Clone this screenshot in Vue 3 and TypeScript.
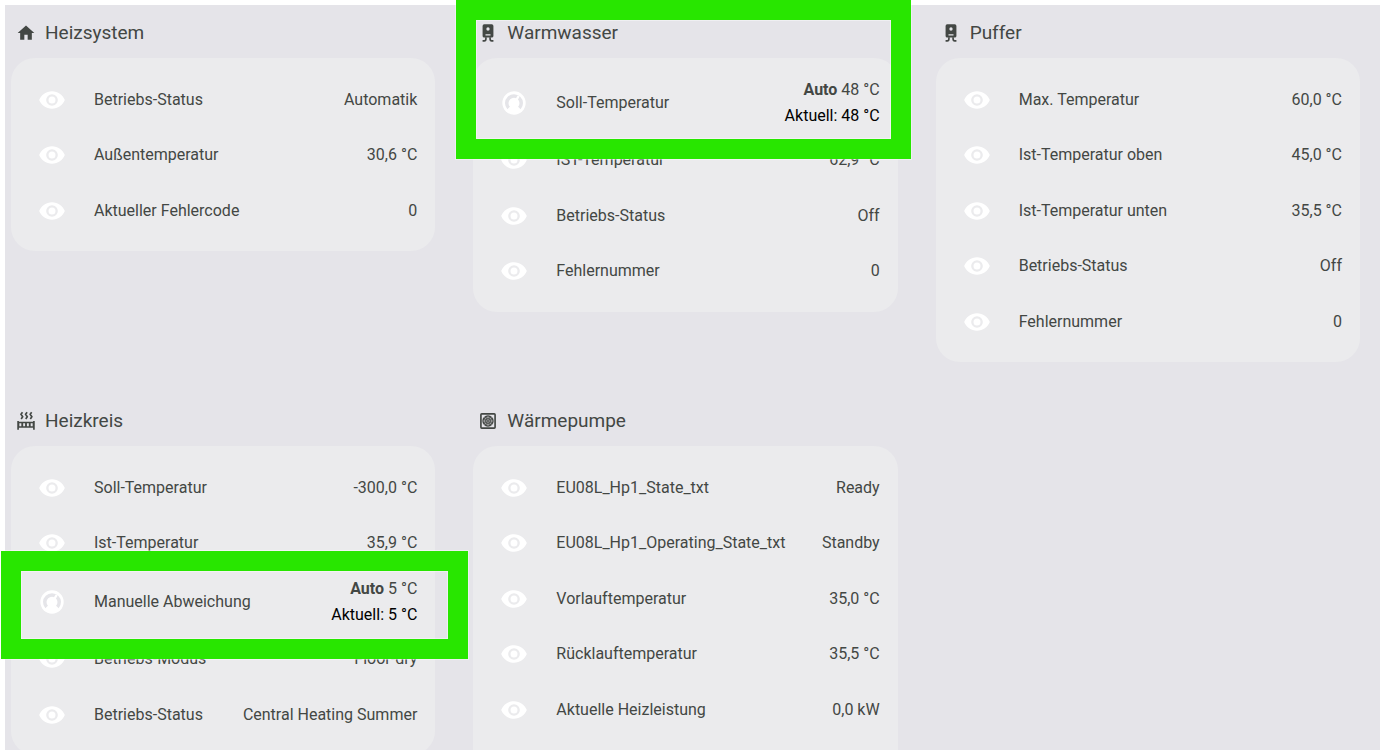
<script setup lang="ts">
type IconName = 'home' | 'boiler' | 'radiator' | 'heatpump'

interface Row {
  label: string
  value: string
  setpoint?: boolean
}

interface Section {
  title: string
  icon: IconName
  rows: Row[]
  long?: boolean
}

const sections: Section[] = [
  {
    title: 'Heizsystem',
    icon: 'home',
    rows: [
      { label: 'Betriebs-Status', value: 'Automatik' },
      { label: 'Außentemperatur', value: '30,6 °C' },
      { label: 'Aktueller Fehlercode', value: '0' },
    ],
  },
  {
    title: 'Warmwasser',
    icon: 'boiler',
    rows: [
      { label: 'Soll-Temperatur', value: '48 °C', setpoint: true },
      { label: 'IST-Temperatur', value: '62,9 °C' },
      { label: 'Betriebs-Status', value: 'Off' },
      { label: 'Fehlernummer', value: '0' },
    ],
  },
  {
    title: 'Puffer',
    icon: 'boiler',
    rows: [
      { label: 'Max. Temperatur', value: '60,0 °C' },
      { label: 'Ist-Temperatur oben', value: '45,0 °C' },
      { label: 'Ist-Temperatur unten', value: '35,5 °C' },
      { label: 'Betriebs-Status', value: 'Off' },
      { label: 'Fehlernummer', value: '0' },
    ],
  },
  {
    title: 'Heizkreis',
    icon: 'radiator',
    rows: [
      { label: 'Soll-Temperatur', value: '-300,0 °C' },
      { label: 'Ist-Temperatur', value: '35,9 °C' },
      { label: 'Manuelle Abweichung', value: '5 °C', setpoint: true },
      { label: 'Betriebs-Modus', value: 'Floor-dry' },
      { label: 'Betriebs-Status', value: 'Central Heating Summer' },
    ],
  },
  {
    title: 'Wärmepumpe',
    icon: 'heatpump',
    long: true,
    rows: [
      { label: 'EU08L_Hp1_State_txt', value: 'Ready' },
      { label: 'EU08L_Hp1_Operating_State_txt', value: 'Standby' },
      { label: 'Vorlauftemperatur', value: '35,0 °C' },
      { label: 'Rücklauftemperatur', value: '35,5 °C' },
      { label: 'Aktuelle Heizleistung', value: '0,0 kW' },
    ],
  },
]
</script>

<template>
  <div class="page">
    <main class="board">
      <section v-for="s in sections" :key="s.title" class="section">
        <h2 class="title">
          <svg class="title-icon" viewBox="0 0 24 24" aria-hidden="true">
            <path v-if="s.icon === 'home'" d="M10 20v-6h4v6h5v-8h3L12 3 2 12h3v8z" />
            <template v-else-if="s.icon === 'boiler'">
              <path
                fill-rule="evenodd"
                d="M7.500 1.500h9a2 2 0 0 1 2 2v12a2 2 0 0 1-2 2h-9a2 2 0 0 1-2-2v-12a2 2 0 0 1 2-2zM12 5.200a2 2 0 1 0 0 4 2 2 0 0 0 0-4zM9 13.500v1.500h6v-1.500z"
              />
              <path class="line" d="M9.500 17v2q0 2.500-2 2.500h-2M14.500 17v2q0 2.500 2 2.500h2" />
            </template>
            <template v-else-if="s.icon === 'radiator'">
              <path class="line" d="M7.800 1.500l-1.800 2.500 2 3-1.800 2.500M13.300 1.500l-1.800 2.500 2 3-1.800 2.500M18.800 1.500l-1.800 2.500 2 3-1.800 2.500" />
              <path
                fill-rule="evenodd"
                d="M1.500 12h2v.8h17V12h2v10.500h-2V20h-17v2.500h-2zM4 14.700v3.500h2.400v-3.500zM8.600 14.700v3.500h2.300v-3.500zM13.100 14.700v3.500h2.300v-3.500zM17.600 14.700v3.500H20v-3.500z"
              />
            </template>
            <template v-else>
              <rect class="line" x="3.500" y="3.500" width="17" height="17" rx="1" />
              <circle cx="12" cy="12" r="6.800" />
              <circle class="grill" cx="12" cy="12" r="4.300" />
              <circle class="grill" cx="12" cy="12" r="1.700" />
              <path class="grill" d="M12 6v3M12 15v3M6 12h3M15 12h3M7.800 7.800l2 2M14.200 14.200l2 2M16.200 7.800l-2 2M9.800 14.200l-2 2" />
            </template>
          </svg>
          {{ s.title }}
        </h2>
        <ul class="card" :class="{ 'card-long': s.long }">
          <li v-for="r in s.rows" :key="r.label" class="row" :class="{ 'row-setpoint': r.setpoint }">
            <svg class="row-icon" viewBox="0 0 24 24" aria-hidden="true">
              <template v-if="r.setpoint">
                <circle cx="12" cy="12" r="10" />
                <path class="dial" d="M7.400 16.300A6.200 6.200 0 1 1 16.600 16.300" />
                <path class="needle" d="M12 13L16 6" />
                <circle cx="12" cy="13" r="2.500" />
              </template>
              <path
                v-else
                d="M12 9a3 3 0 1 0 0 6 3 3 0 0 0 0-6m0 8a5 5 0 1 1 0-10 5 5 0 0 1 0 10m0-12.500C7 4.500 2.730 7.610 1 12c1.730 4.390 6 7.500 11 7.500s9.270-3.110 11-7.500c-1.730-4.390-6-7.500-11-7.500z"
              />
            </svg>
            <span class="label">{{ r.label }}</span>
            <span v-if="r.setpoint" class="value">
              <span class="target"><b>Auto</b> {{ r.value }}</span>
              <span class="current">Aktuell: {{ r.value }}</span>
            </span>
            <span v-else class="value">{{ r.value }}</span>
            <span v-if="r.setpoint" class="marker" :class="`marker-${s.icon}`"></span>
          </li>
        </ul>
      </section>
    </main>
  </div>
</template>

<style>
body {
  margin: 0;
  background: #fff;
}
</style>

<style scoped>
.page {
  box-sizing: border-box;
  height: 100vh;
  padding: 5px 0 0 5px;
  overflow: hidden;
  background: #fff;
  color: #434744;
  font-family: Roboto, "Liberation Sans", sans-serif;
  font-size: 16px;
  line-height: 26px;
}

.board {
  display: grid;
  grid-template-columns: repeat(3, minmax(0, 1fr));
  align-items: start;
  gap: 31px 38px;
  min-height: 100%;
  padding: 0 20px 0 6px;
  background: #e5e4e9;
}

.title {
  display: flex;
  align-items: center;
  gap: 9px;
  margin: 0;
  padding: 16px 5px 13px;
  font-size: 19px;
  font-weight: 400;
  line-height: 24px;
}

.title-icon {
  width: 20px;
  height: 20px;
  fill: #434744;
}

.line {
  fill: none;
  stroke: #434744;
  stroke-width: 2;
}

.grill {
  fill: none;
  stroke: #a3a4a6;
  stroke-width: 1;
}

.card {
  margin: 0;
  padding: 14px 0 13px;
  border-radius: 24px;
  background: #ebebed;
  list-style: none;
}

.card-long {
  padding-bottom: 72px;
}

.row {
  position: relative;
  display: flex;
  align-items: center;
  box-sizing: border-box;
  height: 55px;
  padding: 0 18px 0 27px;
}

.row:nth-child(even) {
  height: 56px;
}

.row-setpoint {
  height: 60px;
  padding-top: 1px;
}

.row-icon {
  flex: none;
  width: 28px;
  height: 28px;
  margin-right: 28px;
  fill: #fff;
}

.dial {
  fill: none;
  stroke: #e5e5e9;
  stroke-width: 3;
}

.needle {
  fill: none;
  stroke: #fff;
  stroke-width: 2;
}

.label {
  flex: 1;
  white-space: nowrap;
}

.value {
  text-align: right;
  white-space: nowrap;
}

.target,
.current {
  display: block;
}

.current {
  color: #000;
}

.marker {
  position: absolute;
  z-index: 1;
  border: 20px solid #28e600;
  box-shadow: 0 0 0 1px rgba(255, 255, 255, 0.4), inset 0 0 0 1px rgba(255, 255, 255, 0.4);
}

.marker-boiler {
  inset: -72px -13px -27px -17px;
}

.marker-radiator {
  inset: -20px -33px -28px -10px;
}
</style>
